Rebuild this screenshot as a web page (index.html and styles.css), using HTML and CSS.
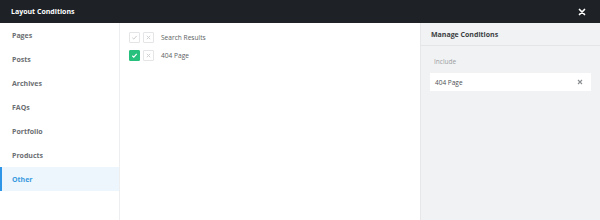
FILE: index.html
```html
<!DOCTYPE html>
<html>
<head>
<meta charset="utf-8">
<link rel="stylesheet" href="styles.css">
</head>
<body>
<div class="app">
  <header class="topbar">
    <span class="title">Layout Conditions</span>
    <span class="close">
      <svg width="8" height="8" viewBox="0 0 8 8"><path d="M1.5 1.5L6.5 6.5M6.5 1.5L1.5 6.5" stroke="#fff" stroke-width="1.7" stroke-linecap="round"/></svg>
    </span>
  </header>
  <div class="main">
    <nav class="sidebar">
      <div class="nav-item">Pages</div>
      <div class="nav-item">Posts</div>
      <div class="nav-item">Archives</div>
      <div class="nav-item">FAQs</div>
      <div class="nav-item">Portfolio</div>
      <div class="nav-item">Products</div>
      <div class="nav-item active">Other</div>
    </nav>
    <section class="content">
      <div class="row">
        <span class="box check">
          <svg width="7" height="7" viewBox="0 0 7 7"><path d="M1.3 3.7L2.8 5.1L5.7 1.9" fill="none" stroke="#c9cbcd" stroke-width="1"/></svg>
        </span>
        <span class="box cross">
          <svg width="7" height="7" viewBox="0 0 7 7"><path d="M1.8 1.8L5.2 5.2M5.2 1.8L1.8 5.2" stroke="#cfd1d3" stroke-width="1"/></svg>
        </span>
        <span class="label">Search Results</span>
      </div>
      <div class="row">
        <span class="box check on">
          <svg width="7" height="7" viewBox="0 0 7 7"><path d="M1.3 3.7L2.8 5.1L5.7 1.9" fill="none" stroke="#fff" stroke-width="1.2"/></svg>
        </span>
        <span class="box cross">
          <svg width="7" height="7" viewBox="0 0 7 7"><path d="M1.8 1.8L5.2 5.2M5.2 1.8L1.8 5.2" stroke="#cfd1d3" stroke-width="1"/></svg>
        </span>
        <span class="label">404 Page</span>
      </div>
    </section>
    <aside class="panel">
      <div class="panel-head">Manage Conditions</div>
      <div class="panel-body">
        <div class="group-label">Include</div>
        <div class="cond">
          <span>404 Page</span>
          <svg width="6" height="6" viewBox="0 0 6 6"><path d="M1 1L5 5M5 1L1 5" stroke="#8a8d90" stroke-width="1.1"/></svg>
        </div>
      </div>
    </aside>
  </div>
</div>
</body>
</html>
```
FILE: styles.css
```css
* { box-sizing: border-box; }
html, body { margin: 0; padding: 0; }
body {
  width: 600px;
  height: 220px;
  overflow: hidden;
  font-family: "Open Sans", "Noto Sans", sans-serif;
  background: #fff;
}
.app { display: flex; flex-direction: column; height: 220px; }
.topbar {
  height: 23px;
  background: #1e2227;
  display: flex;
  align-items: center;
  justify-content: space-between;
  padding: 0 14px 0 11px;
  flex: none;
}
.title { color: #fff; font-size: 7px; font-weight: 700; }
.close { display: flex; }
.main { display: flex; flex: 1; min-height: 0; }
.sidebar {
  width: 120px;
  border-right: 1px solid #eceef0;
  flex: none;
}
.nav-item {
  height: 24px;
  display: flex;
  align-items: center;
  padding-left: 12px;
  font-size: 7px;
  font-weight: 700;
  color: #6b6e72;
}
.nav-item.active {
  background: #edf5fd;
  color: #3a9be0;
  border-left: 2px solid #2f95e6;
  padding-left: 10px;
}
.content {
  flex: 1;
  padding: 9px 9px;
  display: flex;
  flex-direction: column;
  gap: 7px;
}
.row { display: flex; align-items: center; gap: 3px; height: 11px; }
.box {
  width: 11px;
  height: 11px;
  border: 1px solid #e3e5e7;
  border-radius: 1px;
  display: flex;
  align-items: center;
  justify-content: center;
  background: #fff;
}
.box.on { background: #27c07d; border-color: #27c07d; }
.label { margin-left: 4px; font-size: 6.6px; color: #5c5f63; }
.panel {
  width: 180px;
  flex: none;
  background: #f1f2f4;
  border-left: 1px solid #e6e7e9;
  display: flex;
  flex-direction: column;
}
.panel-head {
  height: 23px;
  display: flex;
  align-items: center;
  padding-left: 10px;
  font-size: 7px;
  font-weight: 700;
  color: #3b3e42;
  border-bottom: 1px solid #e4e5e8;
}
.panel-body { padding: 10px 9px 0 9px; }
.group-label { font-size: 6.5px; color: #9a9da1; padding-left: 4px; height: 12px; line-height: 12px; margin-bottom: 5px; }
.cond {
  background: #fff;
  height: 18px;
  display: flex;
  align-items: center;
  justify-content: space-between;
  padding: 0 8px 0 5px;
  font-size: 6.5px;
  color: #4d5054;
}
```
